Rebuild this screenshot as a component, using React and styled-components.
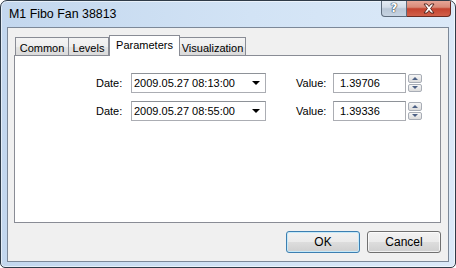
import styled, { createGlobalStyle } from 'styled-components';

const Global = createGlobalStyle`
  html, body {
    margin: 0;
    padding: 0;
    background: #fff;
  }
  body {
    font-family: "Liberation Sans", Arial, sans-serif;
    font-size: 11px;
    color: #000;
  }
`;

const Window = styled.div`
  width: 456px;
  height: 268px;
  box-sizing: border-box;
  border: 1px solid #2f3b48;
  border-radius: 7px 7px 5px 5px;
  background: linear-gradient(to right, #c3d7ee 0%, #d2e3f5 55%, #dbe9f8 100%);
  box-shadow: inset 0 0 0 1px rgba(255, 255, 255, 0.55);
  display: flex;
  flex-direction: column;
  overflow: hidden;
`;

const TitleBar = styled.div`
  height: 26px;
  display: flex;
  justify-content: space-between;
  align-items: flex-start;
  padding-left: 8px;
`;

const Title = styled.div`
  font-size: 12.4px;
  line-height: 27px;
  color: #000;
`;

const CaptionButtons = styled.div`
  display: flex;
  margin-right: 4px;
  margin-top: -1px;
`;

const CaptionButton = styled.div`
  width: ${p => p.$w}px;
  height: 17px;
  box-sizing: border-box;
  border: 1px solid #5d6b7c;
  border-top: none;
  display: flex;
  align-items: center;
  justify-content: center;
  ${p => p.$close ? `
    border-radius: 0 0 4px 0;
    border-left: none;
    border-color: #6a2b22;
    background: linear-gradient(#e9a99b 0%, #d98a78 45%, #c5432f 55%, #d1604a 100%);
  ` : `
    border-radius: 0 0 0 4px;
    background: linear-gradient(#e7eef6 0%, #d3dde9 45%, #b9c7d7 55%, #c6d3e2 100%);
  `}
`;

const HelpGlyph = styled.span`
  font-family: "DejaVu Sans", sans-serif;
  font-weight: bold;
  font-size: 12px;
  line-height: 1;
  color: #fff;
  text-shadow: 0 0 1px #2c3644, 0 0 1px #2c3644, 0 0 1px #2c3644;
`;

const Client = styled.div`
  flex: 1;
  margin: 0 6px 5px 6px;
  border: 1px solid #7c8898;
  background: #f0f0f0;
  display: flex;
  flex-direction: column;
  padding: 7px 7px 8px 6px;
`;

const TabStrip = styled.div`
  display: flex;
  align-items: flex-end;
  height: 20px;
  padding-left: 1px;
`;

const Tab = styled.div`
  width: ${p => p.$w}px;
  box-sizing: border-box;
  border: 1px solid #898c95;
  border-bottom: none;
  border-left-width: ${p => (p.$first || p.$active ? 1 : 0)}px;
  display: flex;
  align-items: center;
  justify-content: center;
  white-space: nowrap;
  ${p => p.$active ? `
    height: 21px;
    margin-bottom: -1px;
    background: #fff;
    position: relative;
    z-index: 1;
    padding-bottom: 2px;
  ` : `
    height: 18px;
    background: linear-gradient(#f4f4f4 0%, #eeeeee 50%, #e4e4e4 51%, #dadada 100%);
    padding-top: 2px;
  `}
`;

const Panel = styled.div`
  flex: 1;
  background: #fff;
  border: 1px solid #898c95;
  padding-top: 17px;
  display: flex;
  flex-direction: column;
  gap: 8px;
`;

const Row = styled.div`
  display: flex;
  align-items: center;
  height: 20px;
  padding-left: 81px;
`;

const Label = styled.span`
  width: ${p => p.$w}px;
  margin-left: ${p => p.$ml || 0}px;
`;

const Combo = styled.div`
  width: 135px;
  height: 20px;
  box-sizing: border-box;
  border: 1px solid #abadb3;
  border-top-color: #8e9298;
  background: #fff;
  display: flex;
  align-items: center;
  justify-content: space-between;
  padding: 0 4px 0 2px;
`;

const Arrow = styled.span`
  width: 0;
  height: 0;
  border-left: 4px solid transparent;
  border-right: 4px solid transparent;
  border-top: 4px solid #000;
  margin-right: 1px;
`;

const Input = styled.div`
  width: 73px;
  height: 20px;
  box-sizing: border-box;
  border: 1px solid #abadb3;
  border-top-color: #8e9298;
  background: #fff;
  display: flex;
  align-items: center;
  padding-left: 6px;
`;

const Spinner = styled.div`
  width: 14px;
  height: 18px;
  margin-left: 2px;
  display: flex;
  flex-direction: column;
  gap: 1px;
`;

const SpinButton = styled.div`
  flex: 1;
  box-sizing: border-box;
  border: 1px solid #a8adb6;
  border-radius: 2px;
  background: linear-gradient(#f6f6f6, #dcdcdc);
  display: flex;
  align-items: center;
  justify-content: center;
  &::after {
    content: '';
    border-left: 3px solid transparent;
    border-right: 3px solid transparent;
    ${p => p.$down
      ? 'border-top: 3px solid #4d6185;'
      : 'border-bottom: 3px solid #4d6185;'}
  }
`;

const Footer = styled.div`
  display: flex;
  justify-content: flex-end;
  gap: 7px;
  margin-top: 8px;
`;

const Button = styled.div`
  width: 74px;
  height: 22px;
  box-sizing: border-box;
  border: 1px solid ${p => (p.$default ? '#3c7fb1' : '#707070')};
  border-radius: 3px;
  background: linear-gradient(#f2f2f2 0%, #ebebeb 48%, #dddddd 52%, #cfcfcf 100%);
  box-shadow: inset 0 0 0 1px ${p => (p.$default ? '#c5e9f9' : 'rgba(255,255,255,0.7)')};
  display: flex;
  align-items: center;
  justify-content: center;
  font-size: 12px;
`;

const CloseIcon = () => (
  <svg width="14" height="11" viewBox="0 0 14 11">
    <path
      d="M2 1 L5 1 L7 3.5 L9 1 L12 1 L8.6 5.5 L12 10 L9 10 L7 7.5 L5 10 L2 10 L5.4 5.5 Z"
      fill="#fff"
      stroke="#4a1c15"
      strokeWidth="0.9"
      strokeLinejoin="round"
    />
  </svg>
);

const rows = [
  { date: '2009.05.27 08:13:00', value: '1.39706' },
  { date: '2009.05.27 08:55:00', value: '1.39336' },
];

const tabs = [
  { label: 'Common', w: 54 },
  { label: 'Levels', w: 40 },
  { label: 'Parameters', w: 71, active: true },
  { label: 'Visualization', w: 66 },
];

export default function App() {
  return (
    <>
      <Global />
      <Window>
        <TitleBar>
          <Title>M1 Fibo Fan 38813</Title>
          <CaptionButtons>
            <CaptionButton $w={26}>
              <HelpGlyph>?</HelpGlyph>
            </CaptionButton>
            <CaptionButton $w={44} $close>
              <CloseIcon />
            </CaptionButton>
          </CaptionButtons>
        </TitleBar>
        <Client>
          <TabStrip>
            {tabs.map((t, i) => (
              <Tab key={t.label} $w={t.w} $active={t.active} $first={i === 0}>
                {t.label}
              </Tab>
            ))}
          </TabStrip>
          <Panel>
            {rows.map(r => (
              <Row key={r.date}>
                <Label $w={35}>Date:</Label>
                <Combo>
                  {r.date}
                  <Arrow />
                </Combo>
                <Label $w={37} $ml={30}>Value:</Label>
                <Input>{r.value}</Input>
                <Spinner>
                  <SpinButton />
                  <SpinButton $down />
                </Spinner>
              </Row>
            ))}
          </Panel>
          <Footer>
            <Button $default>OK</Button>
            <Button>Cancel</Button>
          </Footer>
        </Client>
      </Window>
    </>
  );
}
